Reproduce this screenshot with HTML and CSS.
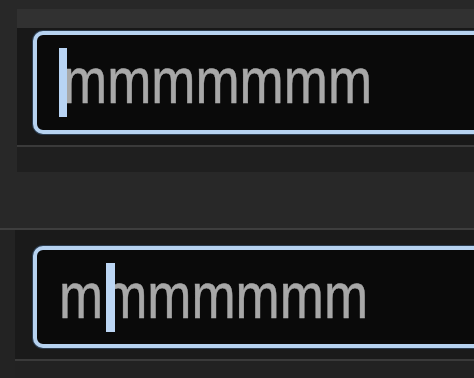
FILE: index.html
```html
<!DOCTYPE html>
<html>
<head>
<meta charset="utf-8">
<link rel="stylesheet" href="styles.css">
</head>
<body>
<div class="page">
  <section class="pane pane-top">
    <div class="pane-head"></div>
    <div class="pane-body">
      <div class="field field-a">
        <span class="value"><span class="caret caret-a"></span><span class="text">mmmmmmm</span></span>
      </div>
    </div>
    <div class="pane-rule"></div>
    <div class="pane-foot"></div>
  </section>
  <section class="pane-bottom">
    <div class="strip"></div>
    <div class="main">
      <div class="main-body">
        <div class="field field-b">
          <span class="value"><span class="caret caret-b"></span><span class="text">mmmmmmm</span></span>
        </div>
      </div>
      <div class="pane-rule"></div>
      <div class="main-foot"></div>
    </div>
  </section>
</div>
</body>
</html>
```
FILE: styles.css
```css
html, body {
  margin: 0;
  padding: 0;
  background: #282828;
  overflow: hidden;
}
.page {
  width: 474px;
  height: 378px;
  overflow: hidden;
  display: flex;
  flex-direction: column;
}
.pane-top {
  margin: 9px 0 0 17px;
  display: flex;
  flex-direction: column;
}
.pane-head {
  height: 19px;
  background: #313131;
}
.pane-body {
  background: #181818;
  padding: 3px 0 11px 16px;
  overflow: hidden;
}
.pane-rule {
  height: 2px;
  background: #3a3a3a;
}
.pane-foot {
  height: 25px;
  background: #1f1f1f;
}
.field {
  width: 520px;
  height: 103px;
  box-sizing: border-box;
  border: 4px solid #b6d2f0;
  border-radius: 10px;
  background: #0a0a0a;
  box-shadow: 0 0 0 1px #2c3d50;
  display: flex;
  align-items: center;
  padding-bottom: 4px;
}
.field-a { padding-left: 26px; }
.field-b { padding-left: 22px; height: 102px; }
.value {
  position: relative;
  display: block;
}
.text {
  display: block;
  font-family: "Liberation Sans", Arial, sans-serif;
  font-size: 53px;
  line-height: 61px;
  color: #a8a8a8;
  transform: scaleY(1.24);
  transform-origin: center;
  -webkit-text-stroke: 0.4px #a8a8a8;
}
.caret {
  position: absolute;
  top: -2px;
  height: 69px;
  background: #b8d4f4;
  z-index: 1;
}
.caret-a { left: -4px; width: 8px; }
.caret-b { left: 47px; width: 9px; background: #bcd6f4; }
.pane-bottom {
  margin-top: 56px;
  border-top: 2px solid #3e3e3e;
  display: flex;
  flex: 1;
}
.strip {
  width: 15px;
  background: #232323;
}
.main {
  flex: 1;
  display: flex;
  flex-direction: column;
  overflow: hidden;
}
.main-body {
  background: #1a1a1a;
  padding: 16px 0 11px 18px;
}
.main-foot {
  flex: 1;
  background: #222222;
}
```
